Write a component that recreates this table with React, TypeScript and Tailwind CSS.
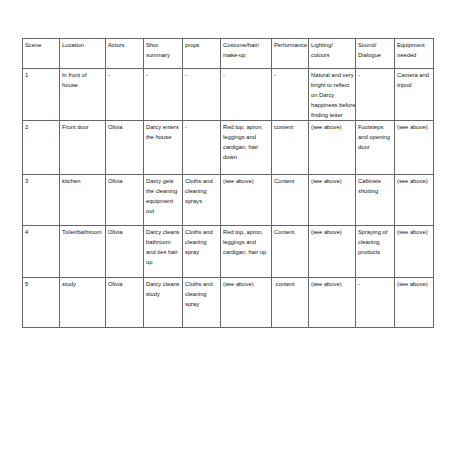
import React from "react";

const colW = [
  "w-[37px]",
  "w-[46px]",
  "w-[38px]",
  "w-[39px]",
  "w-[38px]",
  "w-[51px]",
  "w-[37px]",
  "w-[47px]",
  "w-[39px]",
  "w-[39px]",
];
const rowH = ["h-[30px]", "h-[51px]", "h-[54px]", "h-[51px]", "h-[52px]", "h-[50px]"];

const rows: string[][][] = [
  [["Scene"], ["Location"], ["Actors"], ["Shot", "summary"], ["props"], ["Costume/hair/", "make-up"], ["Performance"], ["Lighting/", "colours"], ["Sound/", "Dialogue"], ["Equipment", "needed"]],
  [["1"], ["In front of", "house"], ["-"], ["-"], ["-"], ["-"], ["-"], ["Natural and very", "bright to reflect", "on Darcy", "happiness before", "finding letter"], ["-"], ["Camera and", "tripod"]],
  [["2"], ["Front door"], ["Olivia"], ["Darcy enters", "the house"], ["-"], ["Red top, apron,", "leggings and", "cardigan, hair", "down"], ["content"], ["(see above)"], ["Footsteps", "and opening", "door"], ["(see above)"]],
  [["3"], ["kitchen"], ["Olivia"], ["Darcy gets", "the cleaning", "equipment", "out"], ["Cloths and", "cleaning", "sprays"], ["(see above)"], ["Content"], ["(see above)"], ["Cabinets", "shutting"], ["(see above)"]],
  [["4"], ["Toilet/bathroom"], ["Olivia"], ["Darcy cleans", "bathroom", "and ties hair", "up"], ["Cloths and", "cleaning", "spray"], ["Red top, apron,", "leggings and", "cardigan, hair up"], ["Content"], ["(see above)"], ["Spraying of", "cleaning", "products"], ["(see above)"]],
  [["5"], ["study"], ["Olivia"], ["Darcy cleans", "study"], ["Cloths and", "cleaning", "spray"], ["(see above)"], ["\u00a0content"], ["(see above)"], ["-"], ["(see above)"]],
];

export default function App() {
  return (
    <div className="w-[453px] h-[453px] bg-white pt-[38px] pl-[22px] font-['Liberation_Sans',Arial,sans-serif]">
      <table className="table-fixed border-collapse border border-[#666666] w-[412px]">
        <colgroup>
          {colW.map((w, i) => (
            <col key={i} className={w} />
          ))}
        </colgroup>
        <tbody>
          {rows.map((row, ri) => (
            <tr key={ri} className={rowH[ri]}>
              {row.map((cell, ci) => (
                <td
                  key={ci}
                  className="border border-[#666666] align-top pl-[2px] pr-0 pt-[1px] text-[5.8px] leading-[10px] text-[#111111] whitespace-nowrap overflow-hidden"
                >
                  {cell.map((line, li) => (
                    <div key={li}>{line}</div>
                  ))}
                </td>
              ))}
            </tr>
          ))}
        </tbody>
      </table>
    </div>
  );
}
